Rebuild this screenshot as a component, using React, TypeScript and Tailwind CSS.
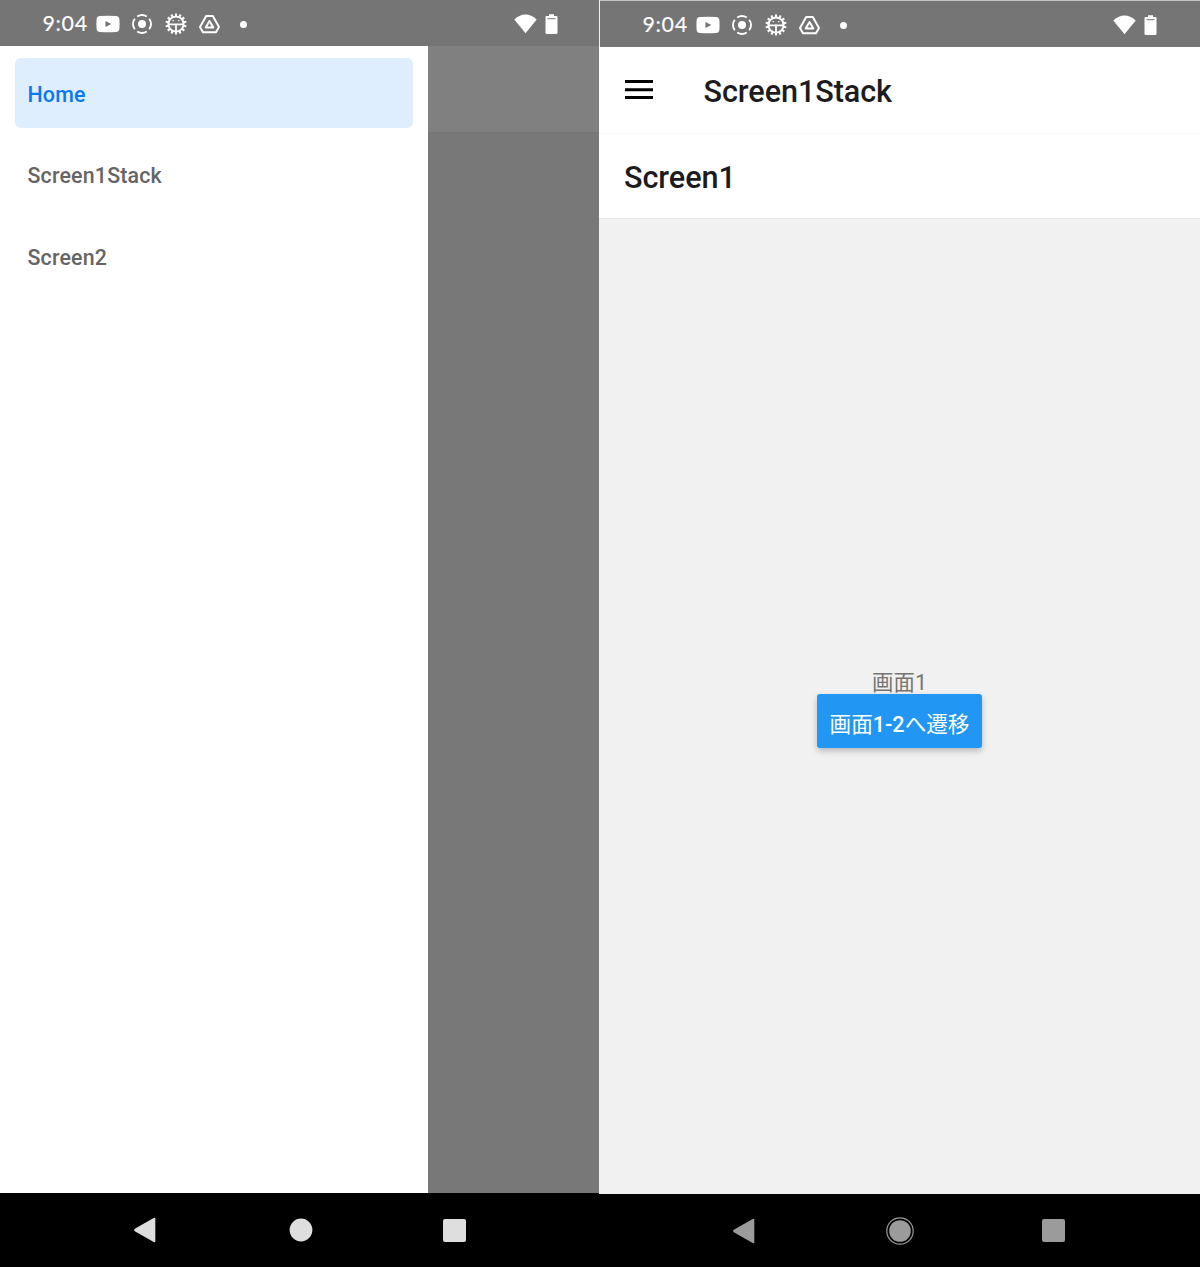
import React from 'react';

interface NavBarProps {
  className: string;
  pressed?: boolean;
}

const drawerItems = ['Home', 'Screen1Stack', 'Screen2'];

const gearTeeth = Array.from({ length: 14 }, (_, i) => (i * 360) / 14);

const YoutubeIcon: React.FC = () => (
  <svg width="24" height="24" viewBox="0 0 24 24" className="shrink-0">
    <path
      fill="white"
      fillRule="evenodd"
      d="M4 3.9Q12 3.5 20 3.9Q23.3 4.1 23.4 7.5Q23.8 12 23.4 16.5Q23.3 19.9 20 20.1Q12 20.5 4 20.1Q.7 19.9 .6 16.5Q.2 12 .6 7.5Q.7 4.1 4 3.9ZM9.4 9V15L15.4 12Z"
    />
  </svg>
);

const RecordIcon: React.FC = () => (
  <svg width="24" height="24" viewBox="0 0 24 24" className="shrink-0">
    <circle cx="12" cy="12" r="4" fill="white" />
    <g fill="none" stroke="white" strokeWidth="1.8">
      <path d="M7.2 4.5A8.9 8.9 0 0 1 16.8 4.5" />
      <path d="M19.2 6.8A8.9 8.9 0 0 1 19.2 17.2" />
      <path d="M16.8 19.5A8.9 8.9 0 0 1 7.2 19.5" />
      <path d="M4.8 17.2A8.9 8.9 0 0 1 4.8 6.8" />
    </g>
  </svg>
);

const GearIcon: React.FC = () => (
  <svg width="24" height="24" viewBox="0 0 24 24" className="shrink-0" stroke="white" fill="none">
    <circle cx="12" cy="12" r="7.6" strokeWidth="2" />
    {gearTeeth.map((angle) => (
      <path key={angle} d="M12 1.4V4.2" strokeWidth="2" transform={`rotate(${angle} 12 12)`} />
    ))}
    <path d="M4.5 12.4H19.5M12 12.4V19.5" strokeWidth="1.8" />
    <path d="M9.2 8.1V9.3M14.8 8.1V9.3" strokeWidth="1.2" />
  </svg>
);

const DriveIcon: React.FC = () => (
  <svg width="24" height="24" viewBox="0 0 24 24" className="shrink-0" stroke="white" fill="none" strokeLinejoin="round">
    <path d="M9.2 3.9H15.8L22 15.1L19 20.3H6L3 15.1Z" strokeWidth="2" />
    <path d="M12.5 9L16.3 15.6H8.7Z" strokeWidth="2" />
  </svg>
);

const StatusBar: React.FC<{ className: string }> = ({ className }) => (
  <div className={`flex shrink-0 items-center bg-[#757575] pb-px text-white ${className}`}>
    <span className="w-[53.5px] pt-[3px] font-['Lato'] text-[21.5px] leading-none font-medium tracking-[0.6px]">9:04</span>
    <div className="flex items-center gap-[9.8px] pt-[3px]">
      <YoutubeIcon />
      <RecordIcon />
      <GearIcon />
      <DriveIcon />
      <span className="mx-[8.5px] size-[7px] rounded-full bg-white" />
    </div>
    <div className="ml-auto flex items-center gap-[8.5px] pt-[3px]">
      <svg width="23" height="20" viewBox="0 0 23 20" fill="white">
        <path d="M.3 5.4Q11.5-4.2 22.7 5.4L11.5 19.2Z" />
      </svg>
      <svg width="13" height="20" viewBox="0 0 13 20">
        <path fill="white" d="M4 2V.3H9V2H11.3Q12.5 2 12.5 3.2V18.7Q12.5 19.9 11.3 19.9H1.7Q.5 19.9 .5 18.7V3.2Q.5 2 1.7 2Z" />
        <path stroke="#757575" d="M2.5 4.7H10.5" />
      </svg>
    </div>
  </div>
);

const NavBar: React.FC<NavBarProps> = ({ className, pressed }) => (
  <div className={`flex shrink-0 items-center bg-black ${className}`}>
    <svg width="24" height="28" viewBox="0 0 24 28" fill="currentColor">
      <path d="M1.8 12.8L20.7 2.1Q22.3 1.2 22.3 3V25Q22.3 26.8 20.7 25.9L1.8 15.2Q.2 14 1.8 12.8Z" />
    </svg>
    <svg width="28" height="28" viewBox="0 0 28 28" className="ml-[130px]">
      <circle cx="14" cy="14" r={pressed ? 10.8 : 11.4} fill="currentColor" />
      {pressed && <circle cx="14" cy="14" r="13.2" fill="none" stroke="currentColor" strokeWidth="1.2" />}
    </svg>
    <span className="ml-[128px] size-[23px] rounded-[2px] bg-current" />
  </div>
);

const DrawerScreen: React.FC = () => (
  <div className="flex w-[599px] flex-col bg-[#787878]">
    <StatusBar className="h-[46px] pr-[41px] pl-[42.5px]" />
    <div className="flex flex-1">
      <nav className="flex w-[428px] flex-col gap-[12px] bg-white pt-[12px] pr-[15px] pl-[15px]">
        {drawerItems.map((item, i) => (
          <button
            key={item}
            className={`flex h-[69.5px] items-center rounded-[6px] pt-[4px] pl-[12.5px] text-left text-[21.4px] font-medium tracking-[0.17px] ${
              i === 0 ? 'bg-[#dfeefe] text-[#0a78f0]' : 'text-[#656566]'
            }`}
          >
            {item}
          </button>
        ))}
      </nav>
      <div className="flex-1">
        <div className="h-[87px] border-b border-[#757575] bg-[#808080]" />
      </div>
    </div>
    <NavBar className="h-[74px] pl-[132.5px] text-[#dedede]" />
  </div>
);

const StackScreen: React.FC = () => (
  <div className="flex w-[601px] flex-col bg-[#f1f1f1]">
    <StatusBar className="ml-px h-[47px] border-t border-[#bfc2bf] pr-[43px] pl-[42.5px]" />
    <header className="flex h-[87px] items-center border-b border-[#f8f8f8] bg-white pl-[26px]">
      <svg width="28" height="20" viewBox="0 0 28 20" fill="black" className="mb-px">
        <path d="M0 0H28V3H0ZM0 8.2H28V11.2H0ZM0 16H28V19H0Z" />
      </svg>
      <h1 className="pt-[3px] pl-[50.5px] text-[30.6px] font-medium tracking-[-0.07px] text-[#1c1c1e]">Screen1Stack</h1>
    </header>
    <header className="flex h-[85px] items-center border-b border-[#e8e8e8] bg-white pl-[25px]">
      <h2 className="pt-[3px] text-[30.6px] font-medium tracking-[-0.07px] text-[#1c1c1e]">Screen1</h2>
    </header>
    <main className="flex flex-1 flex-col items-center justify-center pt-[2px]">
      <p className="h-[26px] text-[21.4px] leading-[30px] text-[#757575]">画面1</p>
      <button className="h-[54px] w-[165px] rounded-[3px] bg-[#2196f3] pt-[9px] text-[21.6px] whitespace-nowrap text-white shadow-[0_3px_6px_rgba(0,0,0,0.24)]">
        画面<span className="font-medium">1-2</span>へ遷移
      </button>
    </main>
    <NavBar className="h-[73px] pl-[133px] text-[#9b9b9b]" pressed />
  </div>
);

export default function App() {
  return (
    <div className="flex h-[1267px] w-[1200px] overflow-hidden font-['Roboto','Noto_Sans_CJK_JP',sans-serif]">
      <DrawerScreen />
      <StackScreen />
    </div>
  );
}
